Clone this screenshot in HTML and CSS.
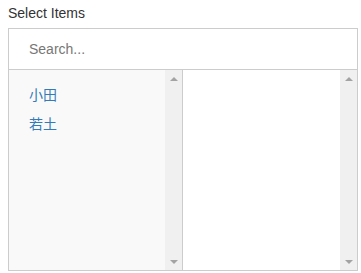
FILE: index.html
```html
<!DOCTYPE html>
<html>
<head>
<meta charset="utf-8">
<link rel="stylesheet" href="styles.css">
</head>
<body>
<div class="field">
  <div class="label">Select Items</div>
  <div class="box">
    <div class="search"><input class="search-input" type="text" placeholder="Search..."></div>
    <div class="panels">
      <div class="panel panel-left">
        <ul class="list">
          <li class="item">小田</li>
          <li class="item">若土</li>
        </ul>
        <div class="scrollbar">
          <span class="arrow arrow-up"></span>
          <span class="arrow arrow-down"></span>
        </div>
      </div>
      <div class="panel panel-right">
        <ul class="list"></ul>
        <div class="scrollbar">
          <span class="arrow arrow-up"></span>
          <span class="arrow arrow-down"></span>
        </div>
      </div>
    </div>
  </div>
</div>
</body>
</html>
```
FILE: styles.css
```css
html, body {
  margin: 0;
  padding: 0;
  background: #ffffff;
}
body {
  font-family: "Liberation Sans", Arial, "Noto Sans CJK SC", sans-serif;
  font-size: 14px;
  color: #333333;
}
.field {
  padding: 3px 4px 0 8px;
}
.label {
  line-height: 20px;
  height: 20px;
  margin-bottom: 5px;
}
.box {
  border: 1px solid #cccccc;
  display: flex;
  flex-direction: column;
  width: 348px;
}
.search {
  height: 40px;
  border-bottom: 1px solid #cccccc;
  display: flex;
  align-items: center;
}
.search-input {
  border: none;
  outline: none;
  font-family: inherit;
  font-size: 14px;
  padding: 0 0 0 20px;
  width: 100%;
  height: 40px;
  color: #555;
  background: transparent;
}
.search-input::placeholder {
  color: #777777;
}
.panels {
  display: flex;
  height: 200px;
}
.panel {
  display: flex;
}
.panel-left {
  width: 173px;
  background: #f9f9f9;
  border-right: 1px solid #cccccc;
}
.panel-right {
  width: 174px;
  background: #ffffff;
}
.list {
  list-style: none;
  margin: 0;
  padding: 15px 0 0 20px;
  flex: 1;
}
.item {
  font-family: "Liberation Sans", "Noto Sans CJK SC", sans-serif;
  color: #337ab7;
  line-height: 20px;
  margin-bottom: 9px;
  font-size: 14px;
}
.scrollbar {
  width: 17px;
  background: #f0f0f0;
  display: flex;
  flex-direction: column;
  justify-content: space-between;
  align-items: center;
  padding: 7px 0 6px;
}
.arrow {
  width: 0;
  height: 0;
  border-left: 4px solid transparent;
  border-right: 4px solid transparent;
}
.arrow-up {
  border-bottom: 4px solid #a3a3a3;
}
.arrow-down {
  border-top: 4px solid #a3a3a3;
}
```
